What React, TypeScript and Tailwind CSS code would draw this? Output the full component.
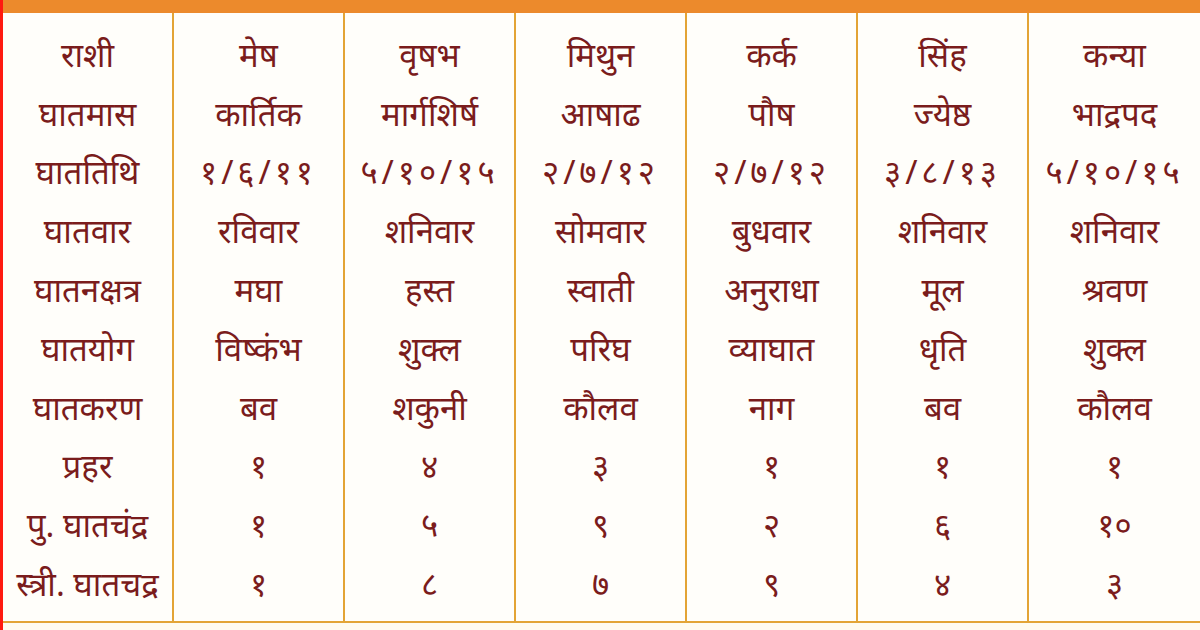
const columns: string[][] = [
  ["राशी", "घातमास", "घाततिथि", "घातवार", "घातनक्षत्र", "घातयोग", "घातकरण", "प्रहर", "पु. घातचंद्र", "स्त्री. घातचद्र"],
  ["मेष", "कार्तिक", "१/६/११", "रविवार", "मघा", "विष्कंभ", "बव", "१", "१", "१"],
  ["वृषभ", "मार्गशिर्ष", "५/१०/१५", "शनिवार", "हस्त", "शुक्ल", "शकुनी", "४", "५", "८"],
  ["मिथुन", "आषाढ", "२/७/१२", "सोमवार", "स्वाती", "परिघ", "कौलव", "३", "९", "७"],
  ["कर्क", "पौष", "२/७/१२", "बुधवार", "अनुराधा", "व्याघात", "नाग", "१", "२", "९"],
  ["सिंह", "ज्येष्ठ", "३/८/१३", "शनिवार", "मूल", "धृति", "बव", "१", "६", "४"],
  ["कन्या", "भाद्रपद", "५/१०/१५", "शनिवार", "श्रवण", "शुक्ल", "कौलव", "१", "१०", "३"],
];

export default function App() {
  return (
    <div
      className="flex h-[630px] w-[1200px] flex-col overflow-hidden border-l-[3px] border-[#ff1a10] bg-[#fffefa] text-[#7a1c1c]"
      style={{ fontFamily: '"Noto Sans", "Lato", sans-serif' }}
    >
      {/* top orange band */}
      <div className="h-[13px] bg-[#ec8a2c]" />

      <div className="grid grid-cols-7 border-b-2 border-[#e3a435]">
        {columns.map((col, i) => (
          <div
            key={i}
            className={`flex flex-col pt-[12px] pb-[8px] ${i < 6 ? "border-r-2 border-[#e3a435]" : ""}`}
          >
            {col.map((cell, j) => (
              <div
                key={j}
                className={`flex h-[58.8px] items-center justify-center whitespace-nowrap text-[33px] leading-none ${
                  cell.includes("/") ? "tracking-[0.12em]" : ""
                }`}
              >
                {cell}
              </div>
            ))}
          </div>
        ))}
      </div>

      <div className="flex-1 bg-[#fffbef]" />
    </div>
  );
}
